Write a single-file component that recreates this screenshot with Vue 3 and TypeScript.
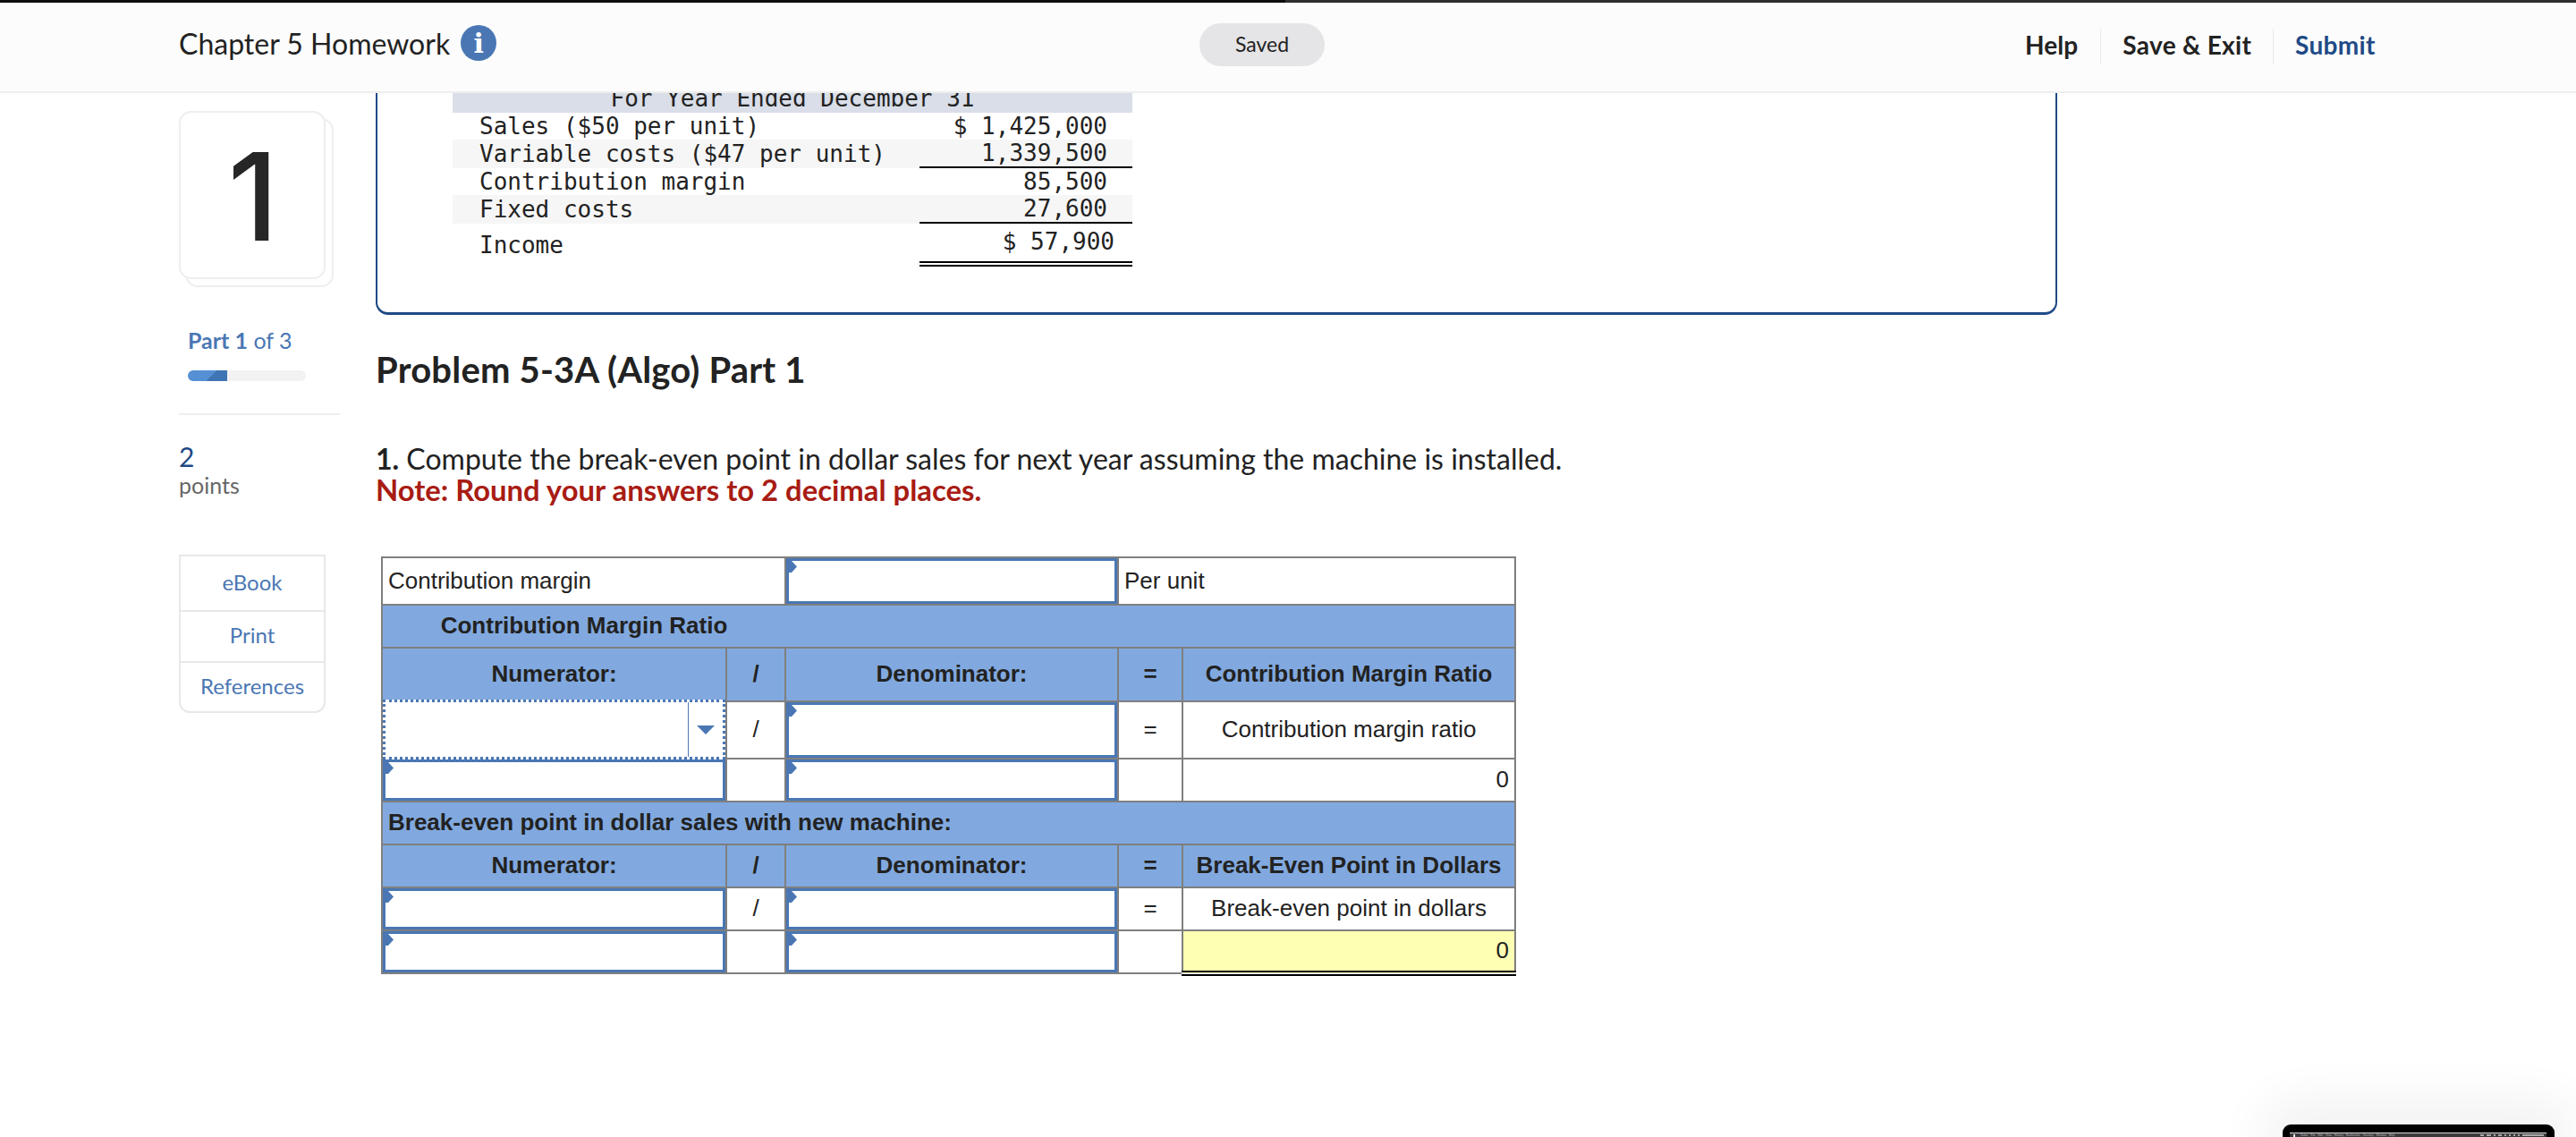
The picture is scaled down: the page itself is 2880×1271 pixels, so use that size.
<script setup lang="ts">
const statement = [
  { label: 'Sales ($50 per unit)', value: '$ 1,425,000', shade: false, rule: false },
  { label: 'Variable costs ($47 per unit)', value: '1,339,500', shade: true, rule: true },
  { label: 'Contribution margin', value: '85,500', shade: false, rule: false },
  { label: 'Fixed costs', value: '27,600', shade: true, rule: true },
]
const links = ['eBook', 'Print', 'References']
const menus = ['Safari', 'File', 'Edit', 'View', 'History', 'Bookmarks', 'Develop', 'Window', 'Help']
const status = [4, 5, 2, 4, 2, 2, 2, 2, 24]
</script>

<template>
  <div class="page">
    <div class="strip"></div>
    <header class="topbar">
      <div class="title">
        <span class="chapter">Chapter 5 Homework</span>
        <span class="info">i</span>
      </div>
      <div class="saved">Saved</div>
      <nav class="actions">
        <a class="act first">Help</a>
        <a class="act">Save &amp; Exit</a>
        <a class="act submit">Submit</a>
      </nav>
    </header>

    <main class="main">
      <aside class="side">
        <div class="stack">
          <div class="stack-back"></div>
          <div class="stack-front">1</div>
        </div>
        <div class="part"><b>Part 1</b> of 3</div>
        <div class="track"><div class="fill"></div></div>
        <div class="rule"></div>
        <div class="pts">2</div>
        <div class="pts-label">points</div>
        <div class="links">
          <a v-for="l in links" :key="l" class="link">{{ l }}</a>
        </div>
      </aside>

      <section class="content">
        <div class="box">
          <table class="stmt">
            <colgroup><col class="s1" /><col class="s2" /></colgroup>
            <tbody>
              <tr class="stmt-head"><td colspan="2">For Year Ended December 31</td></tr>
              <tr v-for="r in statement" :key="r.label" :class="{ shade: r.shade }">
                <td class="lab">{{ r.label }}</td>
                <td class="val" :class="{ ruled: r.rule }">{{ r.value }}</td>
              </tr>
              <tr class="income">
                <td class="lab">Income</td>
                <td class="val total">$ 57,900</td>
              </tr>
            </tbody>
          </table>
        </div>

        <h1 class="heading">Problem 5-3A (Algo) Part 1</h1>
        <p class="q"><b>1.</b> Compute the break-even point in dollar sales for next year assuming the machine is installed.</p>
        <p class="note">Note: Round your answers to 2 decimal places.</p>

        <table class="sheet">
          <colgroup>
            <col class="c1" /><col class="c2" /><col class="c3" /><col class="c4" /><col class="c5" />
          </colgroup>
          <tbody>
            <tr class="r53">
              <td colspan="2" class="left">Contribution margin</td>
              <td class="inp"><div class="field"></div></td>
              <td colspan="2" class="left">Per unit</td>
            </tr>
            <tr class="r48 blue">
              <td colspan="2" class="bold center noright">Contribution Margin Ratio</td>
              <td colspan="3" class="noleft"></td>
            </tr>
            <tr class="r60 blue bold center">
              <td>Numerator:</td><td>/</td><td>Denominator:</td><td>=</td><td>Contribution Margin Ratio</td>
            </tr>
            <tr class="r64 center">
              <td class="inp">
                <div class="select"><div class="sel-main"></div><div class="sel-btn"><span class="caret"></span></div></div>
              </td>
              <td>/</td>
              <td class="inp"><div class="field"></div></td>
              <td>=</td>
              <td>Contribution margin ratio</td>
            </tr>
            <tr class="r48">
              <td class="inp"><div class="field"></div></td>
              <td></td>
              <td class="inp"><div class="field"></div></td>
              <td></td>
              <td class="right">0</td>
            </tr>
            <tr class="r48 blue">
              <td colspan="5" class="bold left">Break-even point in dollar sales with new machine:</td>
            </tr>
            <tr class="r48 blue bold center">
              <td>Numerator:</td><td>/</td><td>Denominator:</td><td>=</td><td>Break-Even Point in Dollars</td>
            </tr>
            <tr class="r48 center">
              <td class="inp"><div class="field"></div></td>
              <td>/</td>
              <td class="inp"><div class="field"></div></td>
              <td>=</td>
              <td>Break-even point in dollars</td>
            </tr>
            <tr class="r48">
              <td class="inp"><div class="field"></div></td>
              <td></td>
              <td class="inp"><div class="field"></div></td>
              <td></td>
              <td class="right yellow">0</td>
            </tr>
          </tbody>
        </table>
      </section>
    </main>

    <div class="device">
      <div class="menubar">
        <span class="apple"></span>
        <span v-for="m in menus" :key="m" class="menu">{{ m }}</span>
        <span class="tray">
          <i v-for="(w, n) in status" :key="n" class="dot" :style="{ width: w + 'px' }"></i>
        </span>
      </div>
    </div>
  </div>
</template>

<style scoped>
.page {
  position: relative;
  width: 2880px;
  height: 1271px;
  overflow: hidden;
  background: #fff;
  color: #222;
  font-family: Lato, "Noto Sans", sans-serif;
}
.strip {
  height: 3px;
  background: linear-gradient(90deg, #0d0d0d 0 1437px, #2e2e2e 1437px);
}
.topbar {
  box-sizing: border-box;
  height: 101px;
  display: flex;
  align-items: flex-start;
  background: #fcfcfc;
  border-bottom: 2px solid #eee;
  position: relative;
}
.title {
  display: flex;
  align-items: center;
  gap: 12px;
  margin: 25px 0 0 200px;
  height: 40px;
  width: 1141px;
}
.chapter { font-size: 32px; white-space: nowrap; }
.info {
  width: 40px;
  height: 40px;
  border-radius: 50%;
  background: #4a77b4;
  color: #fff;
  display: flex;
  align-items: center;
  justify-content: center;
  font-family: "DejaVu Serif", serif;
  font-weight: 700;
  font-size: 30px;
}
.saved {
  width: 140px;
  height: 48px;
  margin-top: 23px;
  padding-bottom: 2px;
  box-sizing: border-box;
  border-radius: 24px;
  background: #e5e4e6;
  font-size: 23px;
  display: flex;
  align-items: center;
  justify-content: center;
}
.actions {
  display: flex;
  margin: 29px 0 0 758px;
  height: 40px;
  align-items: center;
}
.act {
  font-size: 28px;
  font-weight: 700;
  padding: 0 24px;
  line-height: 37px;
  height: 40px;
  letter-spacing: 0.3px;
  border-left: 1px solid #eaeaea;
  white-space: nowrap;
}
.act.first { border-left: 0; padding-left: 25px; padding-right: 25px; letter-spacing: 0.1px; }
.act.submit { color: #1f4a86; }

.main {
  display: flex;
  height: 1167px;
  overflow: hidden;
}
.side {
  box-sizing: border-box;
  width: 420px;
  padding: 20px 0 0 200px;
  flex: none;
}
.stack { position: relative; width: 173px; height: 197px; }
.stack-back {
  position: absolute;
  left: 7px;
  top: 8px;
  width: 166px;
  height: 189px;
  box-sizing: border-box;
  border: 2px solid #eee;
  border-radius: 14px;
}
.stack-front {
  position: absolute;
  left: 0;
  top: 0;
  width: 164px;
  height: 188px;
  box-sizing: border-box;
  padding: 3px 0 0 2px;
  border: 2px solid #eee;
  border-radius: 14px;
  background: #fff;
  display: flex;
  align-items: center;
  justify-content: center;
  font-family: Inter, sans-serif;
  font-weight: 500;
  font-size: 136px;
  line-height: 1;
  color: #262626;
}
.part {
  margin: 44px 0 0 10px;
  font-size: 25px;
  line-height: 30px;
  color: #4a77b4;
}
.part b { font-weight: 700; }
.track {
  width: 132px;
  height: 12px;
  margin: 19px 0 0 10px;
  border-radius: 6px;
  background: #f2f2f2;
  overflow: hidden;
}
.fill {
  width: 44px;
  height: 12px;
  background: linear-gradient(135deg, #5590d4 0 58%, #3f74b5 58% 100%);
}
.rule {
  width: 180px;
  height: 2px;
  margin-top: 36px;
  background: #eee;
}
.pts {
  margin-top: 28px;
  font-size: 30px;
  line-height: 36px;
  color: #1f4a86;
}
.pts-label {
  font-size: 25px;
  line-height: 30px;
  color: #666;
  margin-top: -1px;
}
.links {
  box-sizing: border-box;
  width: 164px;
  height: 177px;
  margin-top: 63px;
  border: 2px solid #e8e8e8;
  border-radius: 0 0 12px 12px;
  display: grid;
  grid-template-rows: 60px 57px 1fr;
}
.link {
  display: flex;
  align-items: center;
  justify-content: center;
  padding-bottom: 4px;
  font-size: 24px;
  color: #4a77b4;
}
.link + .link { border-top: 2px solid #e8e8e8; }

.content { flex: 1; min-width: 0; }
.box {
  display: flow-root;
  box-sizing: border-box;
  width: 1880px;
  height: 248px;
  border: solid #1f4a86;
  border-width: 0 2px 3px 2px;
  border-radius: 0 0 14px 14px;
  padding-left: 84px;
}
.stmt {
  border-collapse: separate;
  border-spacing: 0;
  table-layout: fixed;
  width: 760px;
  margin-top: -9px;
  font-family: "DejaVu Sans Mono", monospace;
  font-size: 26px;
  color: #222;
}
.s1 { width: 522px; }
.s2 { width: 238px; }
.stmt td { padding: 0; white-space: nowrap; height: 30px; line-height: 30px; }
.stmt .stmt-head td { background: #d9dee8; text-align: center; height: 31px; line-height: 31px; }
.shade td { background: #f6f6f6; }
.lab { padding-left: 30px !important; }
.val { text-align: right; padding-right: 28px !important; }
.ruled { border-bottom: 2px solid #000; }
.stmt .income td { height: 48px; }
.stmt .income td.total {
  height: 42px;
  padding-right: 20px !important;
  border-bottom: 6px double #000;
  vertical-align: top;
  line-height: 40px;
}

.heading {
  margin: 38px 0 0;
  font-size: 40px;
  line-height: 46px;
  letter-spacing: 0.2px;
  font-weight: 700;
}
.q {
  margin: 58px 0 0;
  font-size: 32px;
  line-height: 38px;
}
.note {
  margin: -2px 0 0;
  font-size: 32.8px;
  line-height: 36px;
  font-weight: 700;
  color: #a81c14;
}

.sheet {
  border-collapse: collapse;
  table-layout: fixed;
  width: 1267px;
  margin: 56px 0 0 6px;
  font-family: "Liberation Sans", Arial, sans-serif;
  font-size: 26px;
  color: #222;
}
.c1 { width: 385px; }
.c2 { width: 66px; }
.c3 { width: 372px; }
.c4 { width: 72px; }
.c5 { width: 372px; }
.sheet td {
  box-sizing: border-box;
  border: 2px solid #7f7f7f;
  padding: 0 0 1px;
  white-space: nowrap;
}
.sheet td.inp { padding: 0; }
.r53 td { height: 53px; }
.r48 td { height: 48px; }
.r60 td { height: 60px; }
.r64 td { height: 64px; }
.blue td { background: #81a9df; }
.bold { font-weight: 700; }
.center { text-align: center; }
.left { text-align: left; padding-left: 6px !important; }
.right { text-align: right; padding-right: 6px !important; }
.noright { border-right: 0 !important; }
.noleft { border-left: 0 !important; }
.field {
  position: relative;
  box-sizing: border-box;
  border: 3px solid #4a77b4;
  background: #fff;
}
.r53 .field { height: 51px; }
.r48 .field { height: 46px; }
.r64 .field { height: 62px; }
.field::before {
  content: "";
  position: absolute;
  left: -1px;
  top: 0;
  width: 10px;
  height: 13px;
  background: #4a77b4;
  clip-path: polygon(0 0, 40% 0, 100% 50%, 40% 100%, 0 100%);
}
.select {
  position: relative;
  box-sizing: border-box;
  height: 67px;
  margin: -3px 0 -2px;
  display: flex;
  border: 3px dotted #4a77b4;
  background: #fff;
}
.sel-main { flex: 1; }
.sel-btn {
  width: 38px;
  border-left: 1px solid #4a77b4;
  display: flex;
  align-items: center;
  justify-content: center;
}
.caret {
  width: 0;
  height: 0;
  border-left: 10px solid transparent;
  border-right: 10px solid transparent;
  border-top: 10px solid #4a77b4;
}
.sheet td.yellow {
  background: #ffffb3;
  border-top: 2px solid #000;
  border-bottom: 6px double #000;
}

.device {
  position: absolute;
  left: 2552px;
  top: 1257px;
  width: 304px;
  height: 14px;
  box-sizing: border-box;
  padding: 9px 9px 0 8px;
  background: #000;
  border-radius: 9px 9px 0 0;
  box-shadow: 0 0 60px 20px rgba(0, 0, 0, 0.07);
}
.menubar {
  box-sizing: border-box;
  height: 5px;
  border-top: 1px solid #ddd;
  background: #3a3a3c;
  display: flex;
  gap: 3px;
  padding: 0 3px 0 4px;
  align-items: center;
  overflow: hidden;
}
.apple { width: 2px; height: 3px; background: #eee; margin-right: 3px; }
.menu { font: 3.2px/4px "Liberation Sans", sans-serif; color: #bbb; white-space: nowrap; }
.tray { margin-left: auto; display: flex; gap: 3px; align-items: center; }
.dot { height: 2px; background: #aaa; display: block; }
</style>

<style>
html, body { margin: 0; background: #fff; }
</style>
